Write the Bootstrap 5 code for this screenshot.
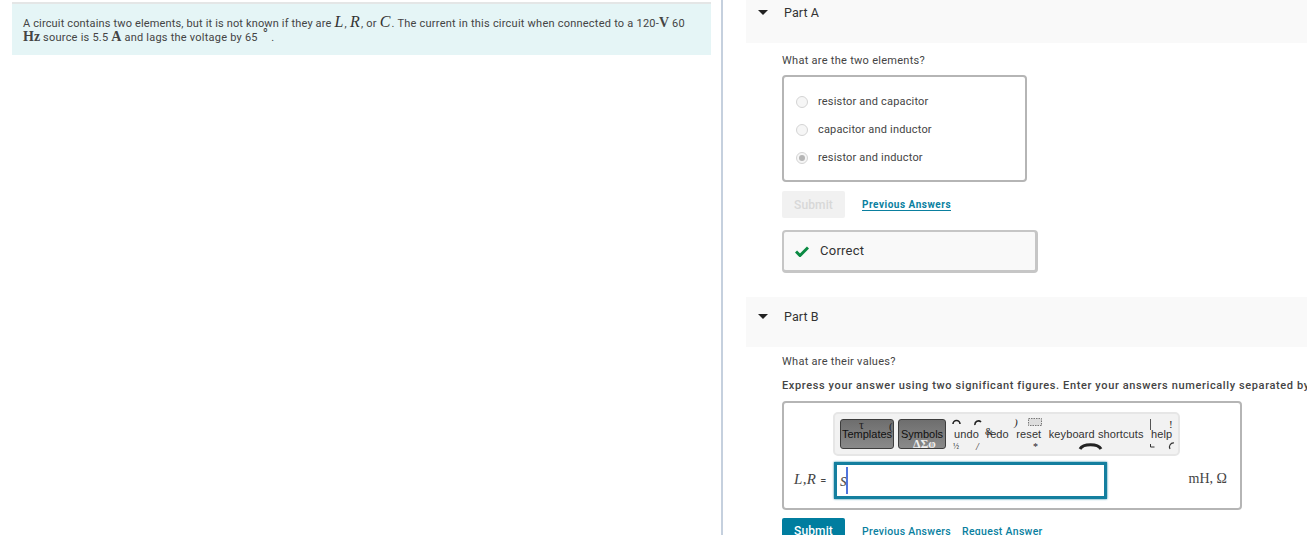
<!DOCTYPE html>
<html lang="en">
<head>
  <meta charset="UTF-8" />
  <title>Part B</title>
  <link href="https://cdn.jsdelivr.net/npm/bootstrap@5.3.3/dist/css/bootstrap.min.css" rel="stylesheet">
  <style>
    html, body { height: 535px; overflow: hidden; }
    body { font-family: Roboto, "Liberation Sans", sans-serif; font-size: 11px; color: #333; background: #fff; }

    .left-pane { width: 723px; height: 535px; flex: none; border-right: 2px solid #c5d0de; padding: 2px 10px 0 12px; }
    .statement { background: #e5f5f6; border-top: 2px solid #e4e6e6; height: 53px; padding: 13px 10px 0 11px; line-height: 14px; letter-spacing: .23px; color: #444; }
    .lead-in { letter-spacing: .15px; }
    .mth { font-family: "Liberation Serif", serif; font-size: 16px; line-height: 0; color: #333; letter-spacing: 1.2px; }
    .mth-up { font-family: "Liberation Serif", serif; font-size: 14px; line-height: 0; font-weight: 700; color: #444; letter-spacing: 0; }
    .mth-it { font-style: italic; }
    .deg-sign { font-size: 14px; line-height: 0; margin-left: 2px; vertical-align: 2px; }

    .right-pane { flex: 1 1 auto; min-width: 0; padding-left: 23px; overflow: hidden; }
    .part-head { background: #f9f9f9; height: 43px; padding: 5px 0 0 12px; font-size: 12.5px; color: #333; line-height: 15px; letter-spacing: .1px; }
    .part-head-b { height: 50px; padding-top: 12px; margin-top: 24px; }
    .caret-down { width: 0; height: 0; border-left: 5px solid transparent; border-right: 5px solid transparent; border-top: 5px solid #222; margin-right: 16px; margin-top: 5px; }
    .part-body { padding-left: 36px; white-space: nowrap; }
    .ask { letter-spacing: .28px; color: #444; line-height: 14px; }
    .ask-a { margin-top: 11px; }

    .choice-box { width: 245px; height: 107px; border: 2px solid #b5b5b5; border-radius: 4px; margin-top: 7px; padding: 11px 0 0 12px; }
    .choice { height: 28px; letter-spacing: .18px; color: #444; }
    .radio-dot { width: 12px; height: 12px; border-radius: 50%; border: 1px solid #d4d4d4; background: #f6f6f6; margin-right: 10px; position: relative; }
    .radio-dot.on::after { content: ""; position: absolute; inset: 2px; border-radius: 50%; background: #b5b5b5; }

    .btn-sub { width: 63px; height: 27px; border: 0; border-radius: 2px; padding: 0; font-size: 12px; font-weight: 500; letter-spacing: .1px; }
    .btn-sub.off { background: #f1f1f1; color: #d8d8d8; }
    .btn-sub.on { background: #007d9f; color: #fff; padding-bottom: 2px; }
    .link-prev { color: #0a7f9f; font-weight: 500; font-size: 10.5px; letter-spacing: .3px; text-decoration: none; margin-left: 17px; }
    .link-prev.ul { border-bottom: 1px solid #0a7f9f; line-height: 11px; font-weight: 700; font-size: 10px; letter-spacing: .52px; }
    .link-next { margin-left: 11px; }
    .row-a { margin-top: 9px; }

    .correct-box { width: 256px; height: 43px; border: 2px solid #c6c6c6; border-bottom-width: 3px; border-right-width: 3px; border-radius: 4px; background: #f9f9f9; margin-top: 12px; padding-left: 11px; font-size: 13px; color: #333; letter-spacing: .25px; }
    .check-mark { margin-right: 11px; }

    .must { font-weight: 500; letter-spacing: .62px; color: #444; margin-top: 10px; line-height: 14px; }
    .answer-box { width: 460px; height: 109px; border: 2px solid #b5b5b5; border-radius: 4px; margin-top: 8px; position: relative; }
    .tool-strip { position: absolute; left: 49px; top: 9px; width: 347px; height: 44px; background: #f2f2f2; border: 2px solid #e6e6e6; border-radius: 5px; padding-left: 5px; font-family: "Liberation Sans", sans-serif; font-size: 11px; letter-spacing: .1px; color: #333; }
    .tool-btn { height: 100%; line-height: 40px; white-space: nowrap; }
    .tool-dark { position: relative; width: 54px; height: 30px; margin-top: 5px; margin-right: 4px; line-height: 28px; text-align: center; letter-spacing: 0; background: linear-gradient(#6e6e6e, #8a8a8a); border: 1px solid #3d3d3d; border-radius: 3px; color: #111; overflow: hidden; }
    .tool-sym { width: 48px; margin-right: 8px; }
    .gap-tool { margin-right: 7.5px; }
    .frag { position: absolute; font-family: "Liberation Serif", serif; line-height: 1; color: #222; }
    .frag-light { color: #eee; font-weight: 700; font-size: 12px; }
    .frag-svg { position: absolute; }

    .eq-label { position: absolute; left: 10px; top: 67px; font-family: "Liberation Serif", serif; font-style: italic; font-size: 15px; color: #444; line-height: 18px; letter-spacing: .3px; }
    .eq-label span { font-family: Roboto, sans-serif; font-style: normal; font-size: 11px; }
    .math-field { position: absolute; left: 50px; top: 59px; width: 273px; height: 37px; border: 3px solid #147f9f; box-shadow: 0 0 2px #147f9f; background: #fff; padding: 1px 0 0 3px; font-family: "Liberation Serif", serif; font-style: italic; font-size: 18px; color: #555; line-height: 28px; }
    .math-cursor { position: absolute; left: 9px; top: 2px; height: 27px; width: 2px; background: #5075dd; }
    .unit-txt { position: absolute; right: 13px; top: 67px; font-family: "Liberation Serif", serif; font-size: 14px; color: #444; line-height: 18px; }
    .last-row { margin-top: 8px; }
  </style>
</head>
<body>
  <div class="d-flex">
    <div class="left-pane">
      <div class="statement">
        <span class="lead-in">A circuit contains two elements, but it is not known if they are</span> <span class="mth mth-it">L</span>, <span class="mth mth-it">R</span>, or <span class="mth mth-it">C</span>. The current in this circuit when connected to a 120-<span class="mth-up">V</span> 60<br>
        <span class="mth-up">Hz</span> source is 5.5 <span class="mth-up">A</span> and lags the voltage by 65 <span class="deg-sign">&deg;</span> .
      </div>
    </div>

    <div class="right-pane">
      <div class="part-head d-flex align-items-start">
        <span class="caret-down"></span><span>Part A</span>
      </div>
      <div class="part-body">
        <div class="ask ask-a">What are the two elements?</div>
        <div class="choice-box">
          <div class="choice d-flex align-items-center"><span class="radio-dot"></span>resistor and capacitor</div>
          <div class="choice d-flex align-items-center"><span class="radio-dot"></span>capacitor and inductor</div>
          <div class="choice d-flex align-items-center"><span class="radio-dot on"></span>resistor and inductor</div>
        </div>
        <div class="d-flex align-items-center row-a">
          <button class="btn-sub off" type="button">Submit</button>
          <a class="link-prev ul" href="#">Previous Answers</a>
        </div>
        <div class="correct-box d-flex align-items-center">
          <svg width="14" height="11" viewBox="0 0 14 11" class="check-mark"><path d="M1 5.5l4 4 8-8" fill="none" stroke="#0b8a43" stroke-width="3"/></svg>
          <span>Correct</span>
        </div>
      </div>

      <div class="part-head part-head-b d-flex align-items-start">
        <span class="caret-down"></span><span>Part B</span>
      </div>
      <div class="part-body">
        <div class="ask mt-2">What are their values?</div>
        <div class="must">Express your answer using two significant figures. Enter your answers numerically separated by a comma.</div>
        <div class="answer-box">
          <div class="tool-strip d-flex">
            <div class="tool-btn tool-dark">Templates<span class="frag" style="left:18px;top:-1px;font-size:12px">&tau;</span><span class="frag" style="left:48px;top:1px;font-size:11px">(</span></div>
            <div class="tool-btn tool-dark tool-sym">Symbols<span class="frag frag-light" style="left:14px;top:18px">&Delta;&Sigma;&phi;</span></div>
            <div class="tool-btn gap-tool">undo</div>
            <div class="tool-btn gap-tool">redo</div>
            <div class="tool-btn gap-tool">reset</div>
            <div class="tool-btn gap-tool">keyboard shortcuts</div>
            <div class="tool-btn">help</div>
            <!-- broken icon bits sitting around the toolbar labels -->
            <svg class="frag-svg" style="left:117px;top:5px" width="10" height="7" viewBox="0 0 10 7"><path d="M1 5a3.5 3.5 0 0 1 7 0" fill="none" stroke="#222" stroke-width="1.6"/></svg>
            <svg class="frag-svg" style="left:139px;top:5px" width="10" height="7" viewBox="0 0 10 7"><path d="M1 6a3.5 3.5 0 0 1 6-3" fill="none" stroke="#222" stroke-width="1.6"/></svg>
            <span class="frag" style="left:150px;top:13px;font-size:10px">&amp;</span>
            <span class="frag" style="left:179px;top:3px;font-size:11px;font-style:italic">)</span>
            <svg class="frag-svg" style="left:193px;top:4px" width="14" height="8" viewBox="0 0 14 8"><rect x=".5" y=".5" width="13" height="7" fill="#ddd" stroke="#777" stroke-dasharray="1.5 1"/></svg>
            <span class="frag" style="left:118px;top:29px;font-size:8px">&frac12;</span>
            <span class="frag" style="left:141px;top:28px;font-size:10px;font-style:italic">/</span>
            <span class="frag" style="left:198px;top:28px;font-size:10px">*</span>
            <svg class="frag-svg" style="left:243px;top:27px" width="25" height="9" viewBox="0 0 25 9"><path d="M2 8a11 6 0 0 1 21 0" fill="none" stroke="#222" stroke-width="3"/></svg>
            <svg class="frag-svg" style="left:315px;top:5px" width="2" height="11"><rect width="1" height="11" fill="#555"/></svg>
            <span class="frag" style="left:334px;top:5px;font-size:11px">!</span>
            <svg class="frag-svg" style="left:315px;top:30px" width="5" height="4"><path d="M.5 0v3h4" fill="none" stroke="#333"/></svg>
            <svg class="frag-svg" style="left:333px;top:28px" width="7" height="8" viewBox="0 0 7 8"><path d="M6 1a4 4 0 0 0-4 6" fill="none" stroke="#333" stroke-width="1.2"/></svg>
          </div>
          <div class="eq-label">L,R <span>=</span></div>
          <div class="math-field">s<span class="math-cursor"></span></div>
          <div class="unit-txt">mH, &Omega;</div>
        </div>
        <div class="d-flex align-items-center last-row">
          <button class="btn-sub on" type="button">Submit</button>
          <a class="link-prev" href="#">Previous Answers</a>
          <a class="link-prev link-next" href="#">Request Answer</a>
        </div>
      </div>
    </div>
  </div>

  <script src="https://cdn.jsdelivr.net/npm/bootstrap@5.3.3/dist/js/bootstrap.bundle.min.js"></script>
</body>
</html>
